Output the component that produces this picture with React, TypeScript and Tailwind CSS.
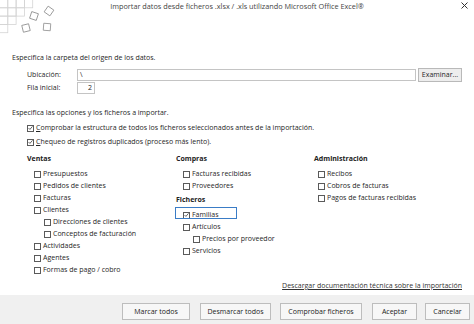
import React from "react";

const Check: React.FC<{ checked?: boolean }> = ({ checked }) => (
  <span className="w-[7px] h-[7px] border border-[#5a5a5a] bg-white shrink-0 flex items-center justify-center">
    {checked && (
      <svg width="6" height="6" viewBox="0 0 6 6">
        <path d="M0.6 3 L2.3 4.7 L5.4 1" fill="none" stroke="#333" strokeWidth="0.9" />
      </svg>
    )}
  </span>
);

const Item: React.FC<{
  label: React.ReactNode;
  checked?: boolean;
  indent?: string;
  focus?: boolean;
}> = ({ label, checked, indent = "", focus }) => (
  <div className={`h-[12px] flex items-center ${indent}`}>
    <div className="relative flex items-center gap-[2px]">
      {focus && (
        <span className="absolute -left-[8px] -top-[3px] w-[62px] h-[12px] border border-[#3a7cc6]" />
      )}
      <Check checked={checked} />
      <span>{label}</span>
    </div>
  </div>
);

const Heading: React.FC<{ children: React.ReactNode; className?: string }> = ({
  children,
  className = "",
}) => (
  <div className={`h-[12px] flex items-center font-bold text-[#222] ${className}`}>
    {children}
  </div>
);

const Logo = () => (
  <svg width="60" height="36" viewBox="0 0 60 36" className="absolute left-0 top-0">
    <g fill="none" stroke="#d4d4d4" strokeWidth="0.8">
      {[0, 1, 2, 3].map((r) =>
        Array.from({ length: 4 - r }).map((_, c) => (
          <rect key={`${r}-${c}`} x={c * 8.3 - 0.5} y={r * 8.3 - 0.5} width="8.3" height="8.3" />
        ))
      )}
    </g>
    <g fill="none" stroke="#9a9a9a" strokeWidth="0.9">
      <rect x="30.5" y="12.5" width="7" height="7" transform="rotate(18 34 16)" />
      <rect x="45.5" y="7.5" width="7" height="7" transform="rotate(35 49 11)" />
      <rect x="22.5" y="24.5" width="7" height="7" transform="rotate(-14 26 28)" />
      <rect x="43.5" y="23.5" width="7" height="7" transform="rotate(4 47 27)" />
    </g>
  </svg>
);

const Btn: React.FC<{ w: string; children: React.ReactNode }> = ({ w, children }) => (
  <div
    className={`${w} h-[17px] border border-[#bdbdbd] bg-[#f7f7f7] flex items-center justify-center text-[#222]`}
  >
    {children}
  </div>
);

export default function App() {
  return (
    <div
      className="w-[474px] h-[324px] bg-white flex flex-col overflow-hidden text-[7px] leading-[10px] text-[#262626]"
      style={{ fontFamily: '"Open Sans", "Noto Sans", sans-serif' }}
    >
      {/* header */}
      <div className="relative h-[53px] shrink-0">
        <Logo />
        <div className="pt-[1px] text-center text-[#444] text-[7.3px]">
          Importar datos desde ficheros .xlsx / .xls utilizando Microsoft Office Excel®
        </div>
        <svg width="7" height="7" viewBox="0 0 7 7" className="absolute right-[6px] top-[2px]">
          <path d="M0.5 0.5 L6.5 6.5 M6.5 0.5 L0.5 6.5" stroke="#333" strokeWidth="1" />
        </svg>
      </div>

      <div className="h-[242px] shrink-0 pl-[12px] pr-[12px] flex flex-col">
        <div>Especifica la carpeta del origen de los datos.</div>

        <div className="ml-[15px] mt-[5px] h-[14px] flex items-center">
          <span className="w-[50px]">Ubicación:</span>
          <div className="flex-1 h-[12px] border border-[#c4c4c4] px-[2px] flex items-center">\</div>
          <div className="ml-[2px] w-[44px] h-[14px] border border-[#b9b9b9] bg-[#ededed] flex items-center justify-center">
            Examinar...
          </div>
        </div>
        <div className="ml-[15px] h-[12px] flex items-center">
          <span className="w-[50px]">Fila inicial:</span>
          <div className="w-[18px] h-[12px] border border-[#c4c4c4] px-[2px] flex items-center justify-end">2</div>
        </div>

        <div className="mt-[14px]">Especifica las opciones y los ficheros a importar.</div>

        <div className="ml-[15px] mt-[3px]">
          <div className="h-[14px] flex items-center gap-[2px]">
            <Check checked />
            <span>
              <span className="underline">C</span>omprobar la estructura de todos los ficheros seleccionados antes de la importación.
            </span>
          </div>
          <div className="h-[14px] flex items-center gap-[2px]">
            <Check checked />
            <span>
              <span className="underline">C</span>hequeo de registros duplicados (proceso más lento).
            </span>
          </div>
        </div>

        <div className="ml-[15px] mt-[4px] flex">
          <div className="w-[149px]">
            <Heading className="mb-[3px]">Ventas</Heading>
            <div className="ml-[7px]">
              <Item label="Presupuestos" />
              <Item label="Pedidos de clientes" />
              <Item label="Facturas" />
              <Item label="Clientes" />
              <Item label="Direcciones de clientes" indent="ml-[10px]" />
              <Item label="Conceptos de facturación" indent="ml-[10px]" />
              <Item label="Actividades" />
              <Item label="Agentes" />
              <Item label="Formas de pago / cobro" />
            </div>
          </div>
          <div className="w-[138px]">
            <Heading className="mb-[3px]">Compras</Heading>
            <div className="ml-[7px]">
              <Item label="Facturas recibidas" />
              <Item label="Proveedores" />
            </div>
            <Heading className="mt-[2px] mb-[3px]">Ficheros</Heading>
            <div className="ml-[7px]">
              <Item label="Familias" checked focus />
              <Item label="Artículos" />
              <Item label="Precios por proveedor" indent="ml-[10px]" />
              <Item label="Servicios" />
            </div>
          </div>
          <div className="flex-1">
            <Heading className="mb-[3px]">Administración</Heading>
            <div className="ml-[4px]">
              <Item label="Recibos" />
              <Item label="Cobros de facturas" />
              <Item label="Pagos de facturas recibidas" />
            </div>
          </div>
        </div>

        <div className="mt-auto pb-[4px] flex justify-end">
          <span className="underline text-[#333]">
            Descargar documentación técnica sobre la importación
          </span>
        </div>
      </div>

      <div className="flex-1 bg-[#f0f0f0] flex items-start justify-end pt-[8px] pr-[4px]">
        <Btn w="w-[68px]">Marcar todos</Btn>
        <div className="w-[10px]" />
        <Btn w="w-[71px]">Desmarcar todos</Btn>
        <div className="w-[9px]" />
        <Btn w="w-[82px]">Comprobar ficheros</Btn>
        <div className="w-[10px]" />
        <Btn w="w-[45px]">Aceptar</Btn>
        <div className="w-[8px]" />
        <Btn w="w-[45px]">Cancelar</Btn>
      </div>
    </div>
  );
}
